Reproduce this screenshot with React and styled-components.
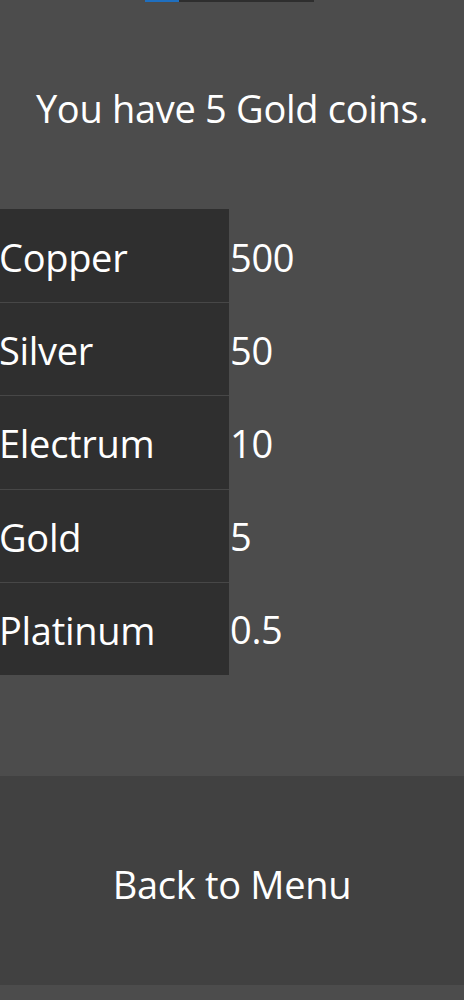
import React from 'react';
import styled, { createGlobalStyle } from 'styled-components';

const GlobalStyle = createGlobalStyle`
    html, body {
        margin: 0;
        padding: 0;
        background: #4c4c4c;
    }
    body {
        font-family: "Open Sans", "Noto Sans", sans-serif;
        color: #ffffff;
    }
`;

const Page = styled.div`
    width: 464px;
    height: 1000px;
    display: flex;
    flex-direction: column;
    background: #4c4c4c;
    overflow: hidden;
`;

const Indicator = styled.div`
    align-self: center;
    width: 169px;
    height: 2px;
    margin-left: -5px;
    display: flex;
    background: #2e2e2e;
`;

const IndicatorFill = styled.div`
    width: 34px;
    background: #1f6fbf;
`;

const Header = styled.div`
    height: 207px;
    display: flex;
    align-items: center;
    justify-content: center;
`;

const Title = styled.h1`
    margin: 0;
    font-size: 38px;
    font-weight: 400;
    letter-spacing: -0.3px;
    padding-top: 4px;
`;

const Table = styled.div`
    display: grid;
    grid-template-columns: 229px 1fr;
    grid-auto-rows: 93.2px;
`;

const Label = styled.div`
    background: #2f2f2f;
    display: flex;
    align-items: center;
    font-size: 38px;
    letter-spacing: -0.3px;
    text-indent: -1px;
    border-top: ${({ first }) => (first ? 'none' : '1px solid #474747')};
    padding-top: 2px;
`;

const Value = styled.div`
    display: flex;
    align-items: center;
    padding-left: 1px;
    font-size: 38px;
    letter-spacing: -0.3px;
    padding-top: 2px;
`;

const Spacer = styled.div`
    height: 101px;
`;

const MenuButton = styled.button`
    height: 209px;
    width: 100%;
    border: none;
    background: #414141;
    color: #ffffff;
    font-family: inherit;
    font-size: 38px;
    letter-spacing: -0.3px;
    padding: 8px 0 0;
    cursor: pointer;
`;

const coins = [
    { name: 'Copper', amount: '500' },
    { name: 'Silver', amount: '50' },
    { name: 'Electrum', amount: '10' },
    { name: 'Gold', amount: '5' },
    { name: 'Platinum', amount: '0.5' },
];

export default function App() {
    return (
        <>
            <GlobalStyle />
            <Page>
                <Indicator>
                    <IndicatorFill />
                </Indicator>
                <Header>
                    <Title>You have 5 Gold coins.</Title>
                </Header>
                <Table>
                    {coins.map((coin, i) => (
                        <React.Fragment key={coin.name}>
                            <Label first={i === 0}>{coin.name}</Label>
                            <Value>{coin.amount}</Value>
                        </React.Fragment>
                    ))}
                </Table>
                <Spacer />
                <MenuButton>Back to Menu</MenuButton>
            </Page>
        </>
    );
}
